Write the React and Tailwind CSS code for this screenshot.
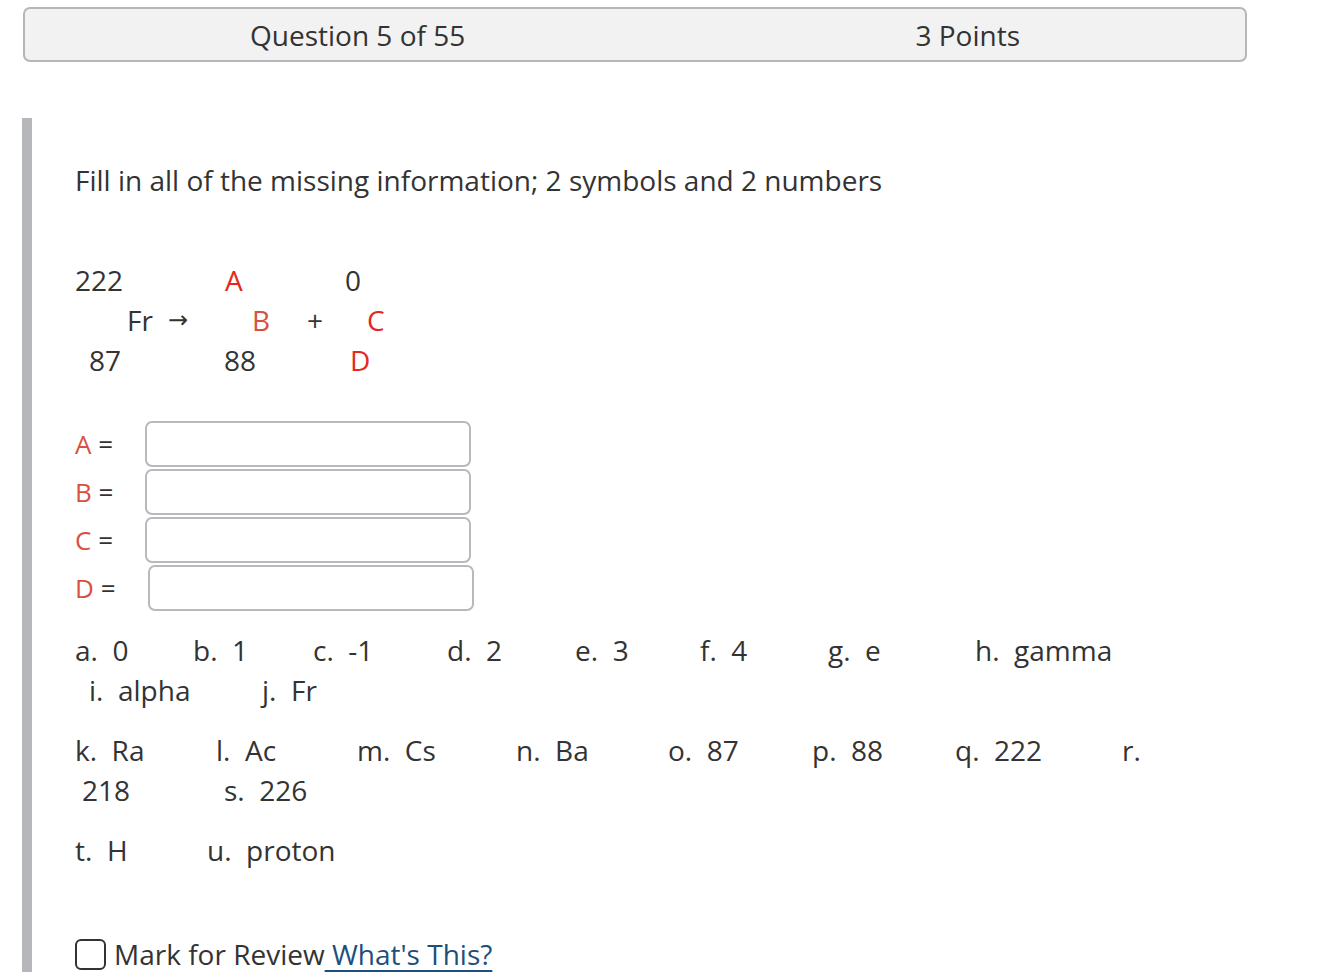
const eqRed = "text-[#e5281e]";

const choiceRows = [
  {
    gap: "",
    items: [
      ["a.", "0", 118],
      ["b.", "1", 120],
      ["c.", "-1", 134],
      ["d.", "2", 128],
      ["e.", "3", 125],
      ["f.", "4", 128],
      ["g.", "e", 147],
      ["h.", "gamma", 0],
    ],
  },
  {
    gap: "",
    indent: "pl-[14px]",
    items: [
      ["i.", "alpha", 173],
      ["j.", "Fr", 0],
    ],
  },
  {
    gap: "mt-[20px]",
    items: [
      ["k.", "Ra", 141],
      ["l.", "Ac", 141],
      ["m.", "Cs", 159],
      ["n.", "Ba", 152],
      ["o.", "87", 144],
      ["p.", "88", 143],
      ["q.", "222", 167],
      ["r.", "", 0],
    ],
  },
  {
    gap: "",
    indent: "pl-[7px]",
    items: [
      ["", "218", 142],
      ["s.", "226", 0],
    ],
  },
  {
    gap: "mt-[20px]",
    items: [
      ["t.", "H", 132],
      ["u.", "proton", 0],
    ],
  },
];

function Blank() {
  return (
    <div className="h-[46px] w-[326px] rounded-[7px] border-2 border-[#b9b9bd] bg-white" />
  );
}

export default function App() {
  return (
    <div className="min-h-[972px] bg-white font-['Open_Sans',sans-serif] text-[28px] text-[#333333]">
      <div className="pl-[23px] pt-[7px]">
        <div className="flex h-[55px] w-[1224px] items-center rounded-[7px] border-2 border-[#b6b6ba] bg-[#f2f2f2]">
          <span className="ml-[225px]">Question 5 of 55</span>
          <span className="ml-auto mr-[225px]">3 Points</span>
        </div>
      </div>

      <div className="ml-[22px] mt-[56px] border-l-[10px] border-[#b6b7bb] pl-[43px] pt-[42px] pb-[4px]">
        <p className="leading-[40px]">Fill in all of the missing information; 2 symbols and 2 numbers</p>

        <div className="mt-[60px] leading-[40px]">
          <div className="flex">
            <span className="w-[150px]">222</span>
            <span className={`w-[120px] ${eqRed}`}>A</span>
            <span>0</span>
          </div>
          <div className="flex pl-[52px]">
            <span className="w-[41px]">Fr</span>
            <span className="w-[84px] font-['DejaVu_Sans',sans-serif] text-[24px]">→</span>
            <span className="w-[55px] text-[#d9503f]">B</span>
            <span className="w-[60px]">+</span>
            <span className={eqRed}>C</span>
          </div>
          <div className="flex pl-[14px]">
            <span className="w-[135px]">87</span>
            <span className="w-[126px]">88</span>
            <span className={eqRed}>D</span>
          </div>
        </div>

        <div className="mt-[41px] flex flex-col gap-[2px] text-[26px]">
          {["A", "B", "C", "D"].map((l) => (
            <div key={l} className="flex items-center">
              <span className={l === "D" ? "w-[73px]" : "w-[70px]"}>
                <span className="text-[#d9503f]">{l}</span> =
              </span>
              <Blank />
            </div>
          ))}
        </div>

        <div className="mt-[19px] leading-[40px]">
          {choiceRows.map((row, i) => (
            <div key={i} className={`flex ${row.gap} ${row.indent || ""}`}>
              {row.items.map(([k, v, w], j) => (
                <span
                  key={j}
                  className="whitespace-pre"
                  style={w ? { width: w } : undefined}
                >
                  {k ? `${k}  ${v}` : v}
                </span>
              ))}
            </div>
          ))}
        </div>

        <div className="mt-[66px] flex items-center leading-[36px]">
          <span className="mr-[8px] inline-block h-[31px] w-[31px] rounded-[6px] border-2 border-[#333333]" />
          <span>Mark for Review</span>
          <a className="whitespace-pre text-[#1d4f7c] underline underline-offset-[5px]" href="#">
            {" What's This?"}
          </a>
        </div>
      </div>
    </div>
  );
}
